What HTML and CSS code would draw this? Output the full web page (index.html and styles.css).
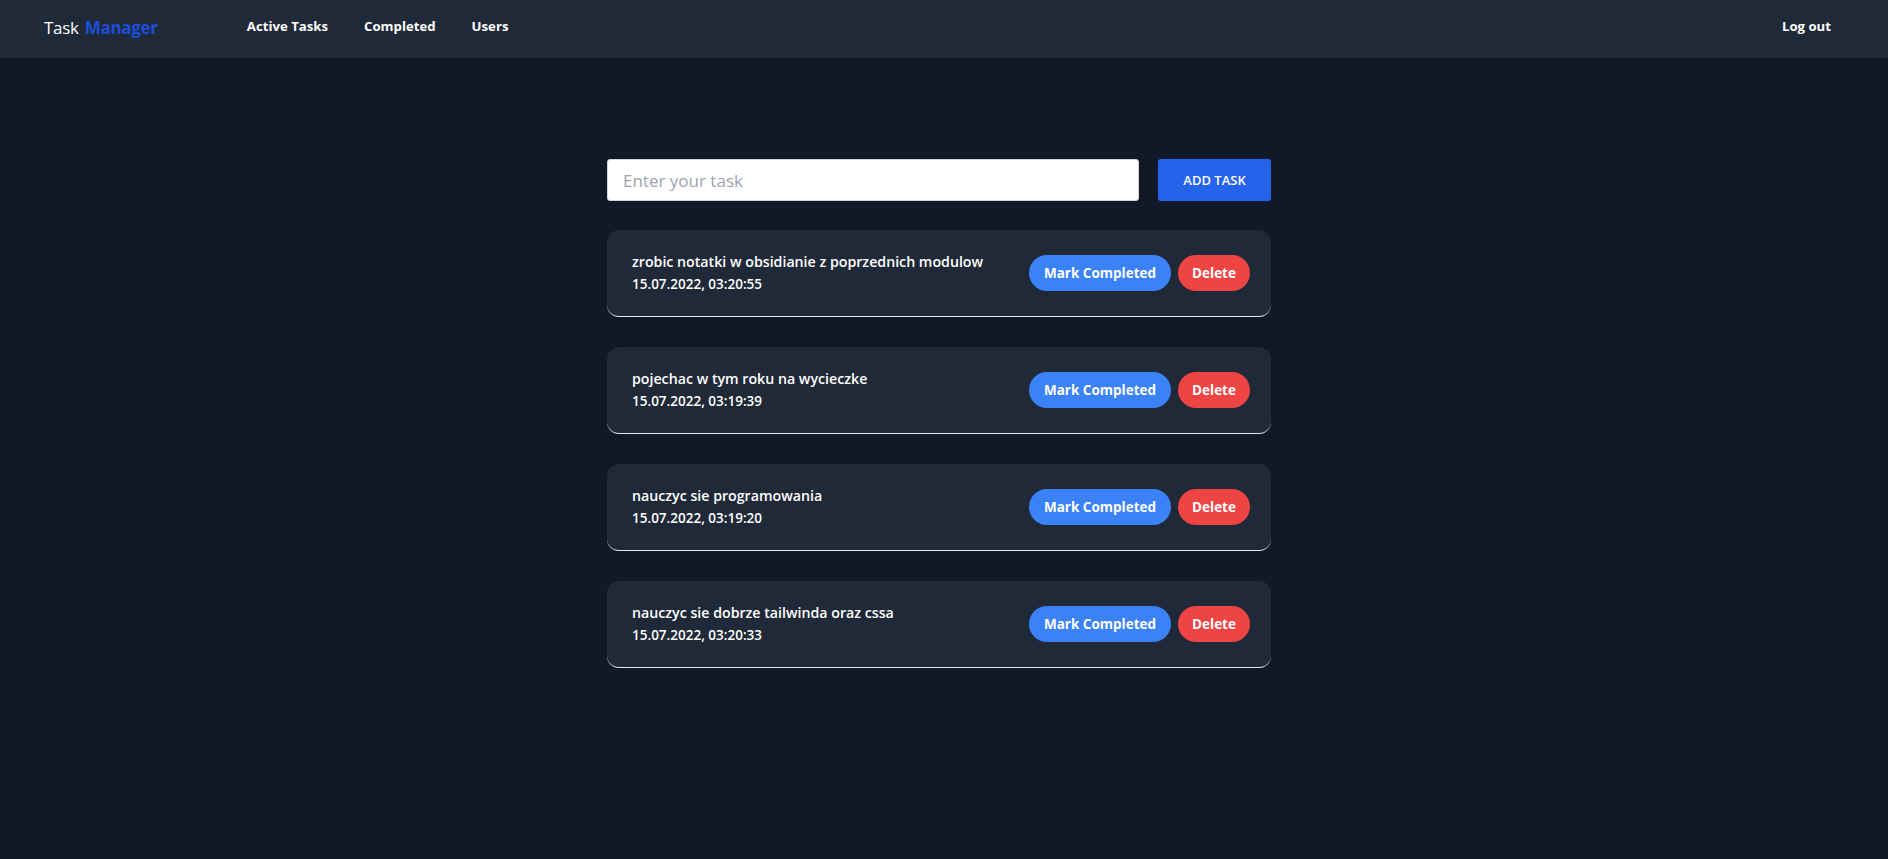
FILE: index.html
```html
<!DOCTYPE html>
<html lang="en">
  <head>
    <meta charset="UTF-8" />
    <meta name="viewport" content="width=device-width, initial-scale=1.0" />
    <title>Task Manager</title>
    <link rel="stylesheet" href="styles.css">
  </head>
  <body>
    <!-- Navbar -->
    <nav class="navbar">
      <a href="#" class="logo">Task <span class="logo-accent">Manager</span></a>
      <div class="nav-links">
        <a href="#">Active Tasks</a>
        <a href="#">Completed</a>
        <a href="#">Users</a>
      </div>
      <a href="#" class="logout">Log out</a>
    </nav>

    <main class="content">
      <form class="task-form">
        <input type="text" class="task-input" placeholder="Enter your task" />
        <button type="button" class="add-btn">ADD TASK</button>
      </form>

      <div class="task-list">
        <div class="task-card">
          <div class="task-info">
            <p class="task-title">zrobic notatki w obsidianie z poprzednich modulow</p>
            <p class="task-date">15.07.2022, 03:20:55</p>
          </div>
          <div class="task-actions">
            <button class="pill complete-btn">Mark Completed</button>
            <button class="pill delete-btn">Delete</button>
          </div>
        </div>

        <div class="task-card">
          <div class="task-info">
            <p class="task-title">pojechac w tym roku na wycieczke</p>
            <p class="task-date">15.07.2022, 03:19:39</p>
          </div>
          <div class="task-actions">
            <button class="pill complete-btn">Mark Completed</button>
            <button class="pill delete-btn">Delete</button>
          </div>
        </div>

        <div class="task-card">
          <div class="task-info">
            <p class="task-title">nauczyc sie programowania</p>
            <p class="task-date">15.07.2022, 03:19:20</p>
          </div>
          <div class="task-actions">
            <button class="pill complete-btn">Mark Completed</button>
            <button class="pill delete-btn">Delete</button>
          </div>
        </div>

        <div class="task-card">
          <div class="task-info">
            <p class="task-title">nauczyc sie dobrze tailwinda oraz cssa</p>
            <p class="task-date">15.07.2022, 03:20:33</p>
          </div>
          <div class="task-actions">
            <button class="pill complete-btn">Mark Completed</button>
            <button class="pill delete-btn">Delete</button>
          </div>
        </div>
      </div>
    </main>
  </body>
</html>
```

FILE: styles.css
```css
body {
  font-family: "Open Sans", "Noto Sans", Arial, sans-serif;
  background-color: #111827;
  margin: 0;
  padding: 0;
  height: 100vh;
  color: white;
}

a {
  text-decoration: none;
  color: white;
}

/* Navbar */
.navbar {
  display: flex;
  align-items: center;
  height: 58px;
  padding: 0 57px 0 44px;
  background-color: #1f2937;
}

.logo {
  font-size: 17px;
  letter-spacing: -0.3px;
  margin-right: 89px;
  margin-top: -4px;
}

.logo-accent {
  color: #1d4ed8;
  font-weight: 700;
  margin-left: 2px;
}

.nav-links {
  display: flex;
  gap: 36px;
  flex: 1;
}

.nav-links a,
.logout {
  font-size: 13.2px;
  font-weight: 700;
  margin-top: -6px;
}

/* Main content */
.content {
  width: 664px;
  margin-left: calc(50% - 337px);
  padding-top: 101px;
}

.task-form {
  display: flex;
  gap: 19px;
  margin: 0;
}

.task-input {
  flex: 1;
  height: 42px;
  box-sizing: border-box;
  padding: 0 15px;
  border: 1px solid #d1d5db;
  border-radius: 3px;
  font-family: inherit;
  font-size: 17px;
  color: #111827;
  background-color: white;
}

.task-input::placeholder {
  color: #9ca3af;
}

.add-btn {
  width: 113px;
  height: 42px;
  border: none;
  border-radius: 3px;
  background-color: #2563eb;
  color: white;
  font-family: inherit;
  font-size: 13px;
  font-weight: 600;
  cursor: pointer;
}

.task-list {
  display: flex;
  flex-direction: column;
  gap: 30px;
  margin-top: 29px;
}

.task-card {
  display: flex;
  justify-content: space-between;
  align-items: center;
  height: 87px;
  box-sizing: border-box;
  padding: 0 21px 0 25px;
  background-color: #1f2937;
  border-radius: 12px;
  border-bottom: 1px solid #e5e7eb;
}

.task-info p {
  margin: 0;
  font-weight: 600;
  line-height: 23px;
}

.task-title {
  font-size: 14.2px;
}

.task-date {
  font-size: 13.5px;
}

.task-actions {
  display: flex;
  gap: 7px;
}

.pill {
  height: 36px;
  border: none;
  border-radius: 18px;
  padding: 0;
  color: white;
  font-family: inherit;
  font-size: 13.5px;
  font-weight: 700;
  cursor: pointer;
}

.complete-btn {
  width: 142px;
  background-color: #3b82f6;
}

.delete-btn {
  width: 72px;
  background-color: #ef4444;
}
```
